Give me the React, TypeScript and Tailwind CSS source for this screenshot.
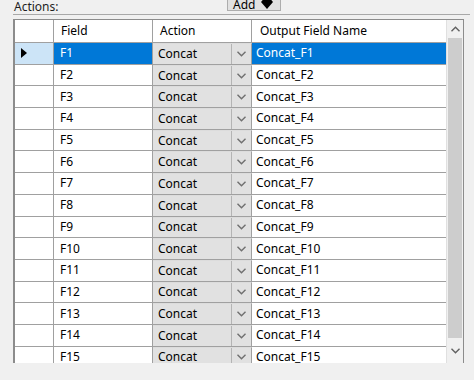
import React from "react";

const rows = Array.from({ length: 15 }, (_, i) => `F${i + 1}`);

function Chevron({ up = false, className = "" }: { up?: boolean; className?: string }) {
  return (
    <svg width="9" height="6" viewBox="0 0 9 6" className={className}>
      <path
        d={up ? "M0.5 5.2 L4.5 1.2 L8.5 5.2" : "M0.5 0.8 L4.5 4.8 L8.5 0.8"}
        fill="none"
        stroke="currentColor"
        strokeWidth="1.4"
      />
    </svg>
  );
}

export default function App() {
  return (
    <div className="w-[474px] h-[380px] bg-[#f0f0f0] overflow-hidden font-['Noto_Sans','Segoe_UI',sans-serif] text-[12px] text-black">
      {/* top bar */}
      <div className="h-[14px] flex items-start">
        <div className="w-[227px] pl-[14px] -mt-[1px] leading-[16px] text-[#1e1e1e]">Actions:</div>
        <div className="w-[54px] h-[12px] -mt-[1px] border border-[#adadad] bg-[#e1e1e1] flex items-end justify-between pl-[5px] pr-[6px] overflow-hidden">
          <span className="leading-[12px] -mb-[1px]">Add</span>
          <svg width="14" height="10" viewBox="0 0 14 10" className="mb-[1px]">
            <path d="M7 -4 L13 3 L7 10 L1 3 Z" fill="#000" />
          </svg>
        </div>
      </div>
      <div className="ml-[13px] mr-[4px] h-px bg-[#a8a8a8]" />
      <div className="h-[4px]" />
      {/* grid */}
      <div className="ml-[13px] w-[451px] h-[344px] border-l-2 border-t border-r border-[#8c8c8c] bg-white flex overflow-hidden">
        <div className="flex-1 flex flex-col overflow-hidden">
          {/* header */}
          <div className="h-[23px] shrink-0 flex border-b border-[#a0a0a0]">
            <div className="w-[39px] border-r border-[#a0a0a0]" />
            <div className="w-[99px] border-r border-[#a0a0a0] pl-[7px] flex items-center">Field</div>
            <div className="w-[99px] border-r border-[#a0a0a0] pl-[7px] flex items-center">Action</div>
            <div className="flex-1 pl-[8px] flex items-center">Output Field Name</div>
          </div>
          {rows.map((f, i) => {
            const sel = i === 0;
            return (
              <div key={f} className="h-[21.7px] shrink-0 flex border-b border-[#a0a0a0]">
                <div
                  className={`w-[39px] border-r border-[#a0a0a0] flex items-center pl-[6px] ${
                    sel ? "bg-[#cce4f7]" : "bg-white"
                  }`}
                >
                  {sel && (
                    <svg width="6" height="10" viewBox="0 0 6 10">
                      <path d="M0 0 L6 5 L0 10 Z" fill="#000" />
                    </svg>
                  )}
                </div>
                <div
                  className={`w-[99px] border-r border-[#a0a0a0] pl-[6px] flex items-center ${
                    sel ? "bg-[#0078d7] text-white" : ""
                  }`}
                >
                  {f}
                </div>
                <div className="w-[99px] border-r border-[#a0a0a0] flex bg-[#e1e1e1] border-t border-t-[#dcdcdc]">
                  <div className="w-[78px] pl-[5px] flex items-center">Concat</div>
                  <div className="flex-1 border-l border-[#b4b4b4] flex items-center justify-center text-[#707070]">
                    <Chevron />
                  </div>
                </div>
                <div className={`flex-1 pl-[4px] flex items-center ${sel ? "bg-[#0078d7] text-white" : ""}`}>
                  Concat_{f}
                </div>
              </div>
            );
          })}
        </div>
        {/* scrollbar */}
        <div className="w-[17px] shrink-0 bg-[#f0f0f0] flex flex-col border-l border-[#e0e0e0]">
          <div className="h-[18px] flex items-center justify-center text-[#606060]">
            <Chevron up />
          </div>
          <div className="flex-1 px-[1px] flex flex-col">
            <div className="h-[300px] bg-[#cdcdcd]" />
          </div>
          <div className="h-[24px] flex items-center justify-center text-[#606060]">
            <Chevron />
          </div>
        </div>
      </div>
    </div>
  );
}
